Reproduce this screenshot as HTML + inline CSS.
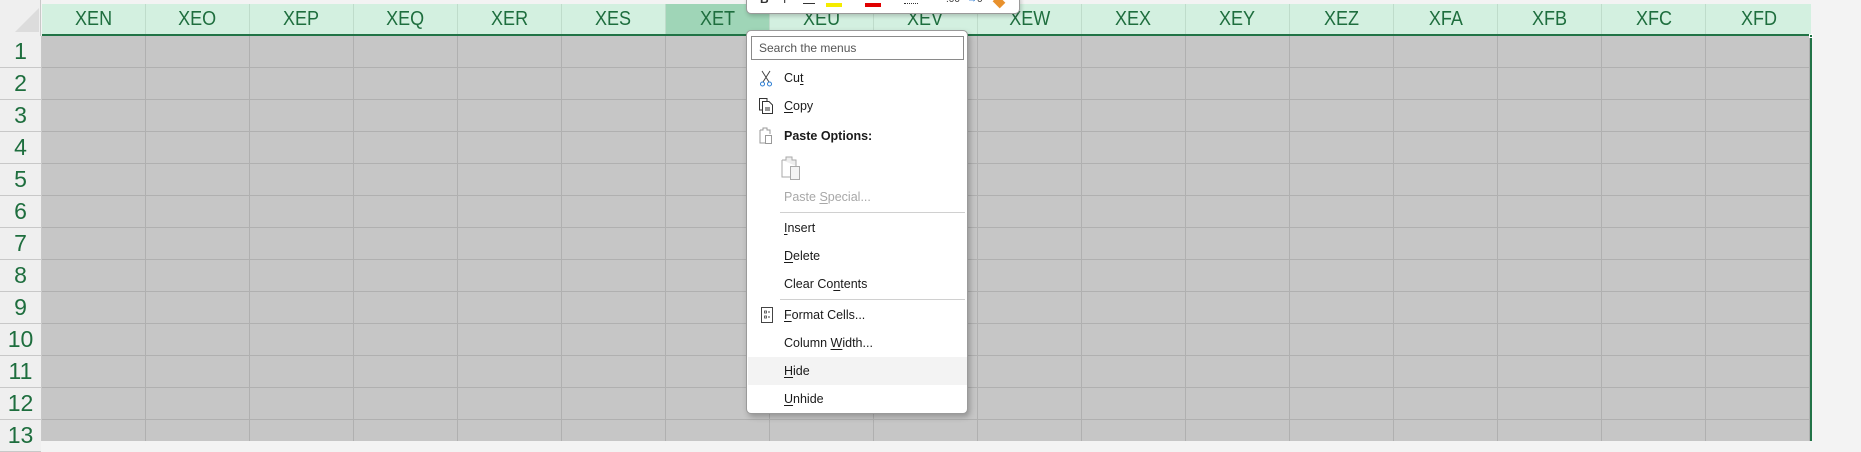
<!DOCTYPE html>
<html><head><meta charset="utf-8"><style>
*{margin:0;padding:0;box-sizing:border-box}
body{width:1861px;height:441px;overflow:hidden;background:#f3f3f3;position:relative;font-family:"Liberation Sans",sans-serif}
.ab{position:absolute}
.ch{position:absolute;top:4px;height:30px;width:104px;background:#d3f0e0;border-right:1px solid #bfdccb;color:#1e6e3e;font-size:20px;text-align:center;line-height:30px;font-family:"Liberation Sans Narrow","Liberation Sans",sans-serif;transform-origin:center}
.ch span{display:inline-block;transform:scaleX(0.9)}
.rh{position:absolute;left:0;width:41px;height:32px;color:#1e6e3e;font-size:23px;text-align:center;line-height:31px;border-bottom:1px solid #c8c8c8;background:#efefef}
.grid{position:absolute;left:42px;top:36px;width:1768px;height:405px;background-color:#c6c6c6;
background-image:repeating-linear-gradient(to right,transparent 0 103px,#b0b0b0 103px 104px),repeating-linear-gradient(to bottom,transparent 0 31px,#b0b0b0 31px 32px)}
.menu{position:absolute;left:746px;top:30px;width:222px;height:384px;background:#fff;border:1px solid #9a9a9a;border-radius:5px;box-shadow:2px 3px 6px rgba(0,0,0,.25)}
.it{position:absolute;left:37px;font-size:12.5px;color:#1a1a1a;line-height:16px}
.sep{position:absolute;left:33px;width:185px;height:1px;background:#d0d0d0}
u{text-decoration:underline;text-underline-offset:2px}
</style></head><body>
<div class="ab" style="left:0;top:0;width:41px;height:36px;background:#efefef;border-right:1px solid #c8c8c8"></div>
<svg class="ab" style="left:0;top:0" width="42" height="36"><polygon points="15,32 39,8 39,32" fill="#dcdcdc"/></svg>
<div class="ch" style="left:42px"><span>XEN</span></div>
<div class="ch" style="left:146px"><span>XEO</span></div>
<div class="ch" style="left:250px"><span>XEP</span></div>
<div class="ch" style="left:354px"><span>XEQ</span></div>
<div class="ch" style="left:458px"><span>XER</span></div>
<div class="ch" style="left:562px"><span>XES</span></div>
<div class="ch" style="left:666px;background:#9fd5b7"><span>XET</span></div>
<div class="ch" style="left:770px"><span>XEU</span></div>
<div class="ch" style="left:874px"><span>XEV</span></div>
<div class="ch" style="left:978px"><span>XEW</span></div>
<div class="ch" style="left:1082px"><span>XEX</span></div>
<div class="ch" style="left:1186px"><span>XEY</span></div>
<div class="ch" style="left:1290px"><span>XEZ</span></div>
<div class="ch" style="left:1394px"><span>XFA</span></div>
<div class="ch" style="left:1498px"><span>XFB</span></div>
<div class="ch" style="left:1602px"><span>XFC</span></div>
<div class="ch" style="left:1706px;width:105px;border-right:none"><span>XFD</span></div>
<div class="ab" style="left:42px;top:34px;width:1770px;height:2px;background:#217346"></div>
<div class="grid"></div>
<div class="ab" style="left:1810px;top:34px;width:2px;height:407px;background:#217346"></div>
<div class="ab" style="left:1809px;top:34px;width:4px;height:4px;background:#217346;border:1px solid #fff"></div>
<div class="rh" style="top:36px">1</div>
<div class="rh" style="top:68px">2</div>
<div class="rh" style="top:100px">3</div>
<div class="rh" style="top:132px">4</div>
<div class="rh" style="top:164px">5</div>
<div class="rh" style="top:196px">6</div>
<div class="rh" style="top:228px">7</div>
<div class="rh" style="top:260px">8</div>
<div class="rh" style="top:292px">9</div>
<div class="rh" style="top:324px">10</div>
<div class="rh" style="top:356px">11</div>
<div class="rh" style="top:388px">12</div>
<div class="rh" style="top:420px">13</div>
<div class="ab" style="left:41px;top:36px;width:1px;height:405px;background:#c8c8c8"></div>
<!-- mini toolbar -->
<div class="ab" style="left:746px;top:-6px;width:274px;height:20px;background:#fff;border:1px solid #9a9a9a;border-radius:5px;box-shadow:1px 2px 4px rgba(0,0,0,.2)"></div>
<div class="ab" style="left:760px;top:-8px;font-size:12px;font-weight:bold;color:#333">B</div>
<div class="ab" style="left:783px;top:-8px;font-size:12px;color:#333">I</div>
<div class="ab" style="left:803px;top:3px;width:12px;height:1px;background:#333"></div>
<div class="ab" style="left:826px;top:3px;width:16px;height:4px;background:#f5ec00"></div>
<div class="ab" style="left:865px;top:3px;width:16px;height:4px;background:#e00000"></div>
<div class="ab" style="left:904px;top:3px;width:14px;height:1px;border-top:1px dotted #333"></div>
<div class="ab" style="left:946px;top:-6px;font-size:10px;color:#333">.00</div>
<div class="ab" style="left:967px;top:-6px;font-size:10px;color:#2b7cd3">→<span style="color:#333">0</span></div>
<div class="ab" style="left:994px;top:-2px;width:10px;height:8px;background:#e8912d;transform:rotate(45deg)"></div>
<!-- context menu -->
<div class="menu">
<div class="ab" style="left:4px;top:5px;width:213px;height:24px;border:1px solid #8a8a8a;font-size:12px;color:#555;line-height:22px;padding-left:7px">Search the menus</div>
<svg class="ab" style="left:12px;top:39px" width="14" height="18"><path d="M3 1 L10 12 M11 1 L4 12" stroke="#444" stroke-width="1" fill="none"/><circle cx="3.5" cy="14" r="2" stroke="#2b7cd3" fill="none"/><circle cx="10.5" cy="14" r="2" stroke="#2b7cd3" fill="none"/></svg>
<div class="it" style="top:39px">Cu<u>t</u></div>
<svg class="ab" style="left:11px;top:66px" width="16" height="18"><path d="M4 13 H1.5 V1.5 H9 V4" stroke="#333" fill="none"/><path d="M4.5 4.5 H11 L14.5 8 V16.5 H4.5 Z" stroke="#333" fill="#fff"/><path d="M7 11 H12 M7 13 H12" stroke="#333"/></svg>
<div class="it" style="top:67px"><u>C</u>opy</div>
<svg class="ab" style="left:11px;top:96px" width="16" height="18"><path d="M2 3 H5 V1 H9 V3 H12 V7" stroke="#999" fill="none"/><path d="M2 3 V16 H7" stroke="#999" fill="none"/><rect x="7.5" y="8.5" width="6" height="8" stroke="#999" fill="#fff"/></svg>
<div class="it" style="top:97px;font-weight:bold">Paste Options:</div>
<svg class="ab" style="left:33px;top:124px" width="22" height="26"><path d="M2 5 H6 V2 H12 V5 H16 V11" stroke="#aaa" fill="#eee"/><path d="M2 5 V22 H10" stroke="#aaa" fill="none"/><rect x="10.5" y="11.5" width="9" height="13" stroke="#aaa" fill="#f4f4f4"/></svg>
<div class="it" style="top:158px;color:#a8a8a8">Paste <u>S</u>pecial...</div>
<div class="sep" style="top:181px"></div>
<div class="it" style="top:189px"><u>I</u>nsert</div>
<div class="it" style="top:217px"><u>D</u>elete</div>
<div class="it" style="top:245px">Clear Co<u>n</u>tents</div>
<div class="sep" style="top:268px"></div>
<svg class="ab" style="left:14px;top:276px" width="14" height="18"><rect x="0.5" y="0.5" width="11" height="15" stroke="#444" fill="none"/><rect x="3.5" y="4" width="2" height="2" stroke="#444" stroke-width=".8" fill="none"/><rect x="3.5" y="9" width="2" height="2" stroke="#444" stroke-width=".8" fill="none"/><path d="M7 5 H9 M7 10 H9" stroke="#444"/></svg>
<div class="it" style="top:276px"><u>F</u>ormat Cells...</div>
<div class="it" style="top:304px">Column <u>W</u>idth...</div>
<div class="ab" style="left:1px;top:326px;width:219px;height:28px;background:#f3f3f3"></div>
<div class="it" style="top:332px"><u>H</u>ide</div>
<div class="it" style="top:360px"><u>U</u>nhide</div>
</div>
</body></html>
